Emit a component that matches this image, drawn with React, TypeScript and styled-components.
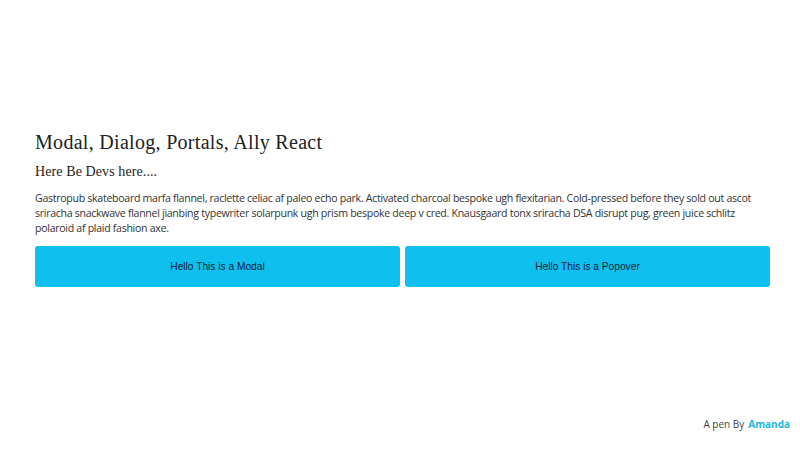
import styled, { createGlobalStyle } from "styled-components";

const GlobalStyle = createGlobalStyle`
  html, body {
    margin: 0;
    padding: 0;
    background: #fff;
  }
  body {
    font-family: "Open Sans", "DejaVu Sans", sans-serif;
    color: #333;
  }
`;

const Page = styled.div`
  min-height: 100vh;
  display: flex;
  flex-direction: column;
  box-sizing: border-box;
`;

const Main = styled.main`
  flex: 1;
  padding: 128px 30px 0 35px;
`;

const Title = styled.h1`
  font-family: "Liberation Serif", "DejaVu Serif", serif;
  font-weight: 400;
  font-size: 20px;
  line-height: 28px;
  letter-spacing: 0.3px;
  color: #222;
  margin: 0 0 6px;
`;

const Subtitle = styled.h2`
  font-family: "Liberation Serif", "DejaVu Serif", serif;
  font-weight: 400;
  font-size: 14px;
  line-height: 20px;
  letter-spacing: 0.1px;
  color: #222;
  margin: 0 0 9px;
`;

const Text = styled.p`
  font-size: 10.6px;
  line-height: 15px;
  letter-spacing: -0.3px;
  margin: 0 0 10px;
  color: #333;
`;

const Actions = styled.div`
  display: grid;
  grid-template-columns: 1fr 1fr;
  gap: 5px;
`;

const Button = styled.button`
  height: 41px;
  border: none;
  border-radius: 3px;
  background: #0fbfed;
  color: #0d2238;
  font-family: "Liberation Sans", Arial, sans-serif;
  font-size: 10.2px;
  cursor: pointer;
`;

const Footer = styled.footer`
  display: flex;
  justify-content: flex-end;
  padding: 0 10px 18px 0;
  font-size: 10px;
  line-height: 15px;
  color: #444;
`;

const Author = styled.a`
  color: #1cb5d9;
  font-weight: 700;
  text-decoration: none;
  margin-left: 4px;
`;

export default function App() {
  return (
    <Page>
      <GlobalStyle />
      <Main>
        <Title>Modal, Dialog, Portals, Ally React</Title>
        <Subtitle>Here Be Devs here....</Subtitle>
        <Text>
          Gastropub skateboard marfa flannel, raclette celiac af paleo echo park. Activated charcoal bespoke ugh
          flexitarian. Cold-pressed before they sold out ascot sriracha snackwave flannel jianbing typewriter
          solarpunk ugh prism bespoke deep v cred. Knausgaard tonx sriracha DSA disrupt pug, green juice schlitz
          polaroid af plaid fashion axe.
        </Text>
        <Actions>
          <Button>Hello This is a Modal</Button>
          <Button>Hello This is a Popover</Button>
        </Actions>
      </Main>
      <Footer>
        A pen By<Author href="#">Amanda</Author>
      </Footer>
    </Page>
  );
}
